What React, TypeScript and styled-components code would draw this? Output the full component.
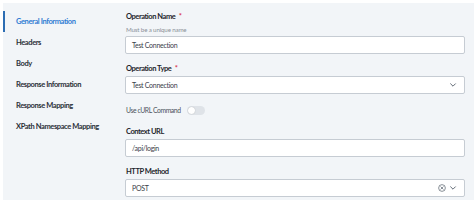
import React from "react";
import styled, { createGlobalStyle } from "styled-components";

const GlobalStyle = createGlobalStyle`
  html, body {
    margin: 0;
    padding: 0;
    background: #ffffff;
  }
  body {
    font-family: Lato, "Noto Sans", sans-serif;
    color: #222831;
  }
  * {
    box-sizing: border-box;
  }
`;

const navItems = [
  "General Information",
  "Headers",
  "Body",
  "Response Information",
  "Response Mapping",
  "XPath Namespace Mapping",
];

function ChevronDown() {
  return (
    <svg width="8" height="8" viewBox="0 0 10 10" fill="none">
      <path d="M2 3.5L5 6.5L8 3.5" stroke="#5b6470" strokeWidth="1.2" strokeLinecap="round" strokeLinejoin="round" />
    </svg>
  );
}

function ClearIcon() {
  return (
    <svg width="8" height="8" viewBox="0 0 10 10" fill="none">
      <circle cx="5" cy="5" r="4.2" stroke="#5b6470" strokeWidth="0.9" />
      <path d="M3.5 3.5L6.5 6.5M6.5 3.5L3.5 6.5" stroke="#5b6470" strokeWidth="0.9" strokeLinecap="round" />
    </svg>
  );
}

export default function App() {
  return (
    <>
      <GlobalStyle />
      <Panel>
        <Sidebar>
          {navItems.map((item, i) => (
            <NavItem key={item} $active={i === 0}>
              {item}
            </NavItem>
          ))}
        </Sidebar>
        <Form>
          <Field>
            <Label>
              Operation Name <Required>*</Required>
            </Label>
            <Hint>Must be a unique name</Hint>
            <Control>
              <Value>Test Connection</Value>
            </Control>
          </Field>
          <Field>
            <Label>
              Operation Type <Required>*</Required>
            </Label>
            <Control>
              <Value>Test Connection</Value>
              <Icons>
                <ChevronDown />
              </Icons>
            </Control>
          </Field>
          <ToggleRow>
            <ToggleLabel>Use cURL Command</ToggleLabel>
            <Track>
              <Knob />
            </Track>
          </ToggleRow>
          <Field>
            <Label>Context URL</Label>
            <Control>
              <Value>/api/login</Value>
            </Control>
          </Field>
          <Field>
            <Label>HTTP Method</Label>
            <Control>
              <Value>POST</Value>
              <Icons>
                <ClearIcon />
                <ChevronDown />
              </Icons>
            </Control>
          </Field>
        </Form>
      </Panel>
    </>
  );
}

const Panel = styled.div`
  margin: 3px 0 0 3px;
  width: 471px;
  height: 197px;
  display: flex;
  background: #f2f5f8;
  overflow: hidden;
`;

const Sidebar = styled.div`
  width: 110px;
  flex-shrink: 0;
  padding-top: 8px;
  display: flex;
  flex-direction: column;
`;

const NavItem = styled.div<{ $active?: boolean }>`
  height: 21px;
  line-height: 21px;
  padding-left: 11px;
  border-left: 2px solid ${(p) => (p.$active ? "#2c6db3" : "transparent")};
  font-size: 7.5px;
  font-weight: 700;
  letter-spacing: -0.4px;
  white-space: nowrap;
  color: ${(p) => (p.$active ? "#2f7cd3" : "#2b3038")};
`;

const Form = styled.div`
  flex: 1;
  padding: 9px 9px 0 12px;
  display: flex;
  flex-direction: column;
  gap: 10px;
`;

const Field = styled.div`
  display: flex;
  flex-direction: column;
`;

const Label = styled.div`
  line-height: 10px;
  font-size: 7.5px;
  font-weight: 700;
  letter-spacing: -0.45px;
  color: #1f252d;
  padding-left: 1px;
  margin-bottom: 2px;
`;

const Required = styled.span`
  color: #d9364a;
  margin-left: 2px;
`;

const Hint = styled.div`
  line-height: 9px;
  font-size: 6.2px;
  letter-spacing: -0.15px;
  color: #8a9099;
  padding-left: 1px;
  margin: 1px 0 2px;
`;

const Control = styled.div`
  height: 18px;
  background: #ffffff;
  border: 1px solid #c6ccd3;
  border-radius: 2px;
  display: flex;
  align-items: center;
  padding: 0 7px 0 6px;
`;

const Value = styled.span`
  flex: 1;
  font-size: 7px;
  letter-spacing: -0.3px;
  color: #3a4049;
`;

const Icons = styled.span`
  display: flex;
  align-items: center;
  gap: 3px;
`;

const ToggleRow = styled.div`
  height: 12px;
  margin-bottom: 1px;
  display: flex;
  align-items: center;
  gap: 6px;
  padding-left: 1px;
`;

const ToggleLabel = styled.span`
  font-size: 6.8px;
  letter-spacing: -0.4px;
  color: #4b525c;
`;

const Track = styled.span`
  width: 18px;
  height: 9px;
  border-radius: 5px;
  background: #dfe3e8;
  display: flex;
  align-items: center;
  padding-left: 1px;
`;

const Knob = styled.span`
  width: 7px;
  height: 7px;
  border-radius: 50%;
  background: #ffffff;
  box-shadow: 0 0 1px rgba(0, 0, 0, 0.3);
`;
